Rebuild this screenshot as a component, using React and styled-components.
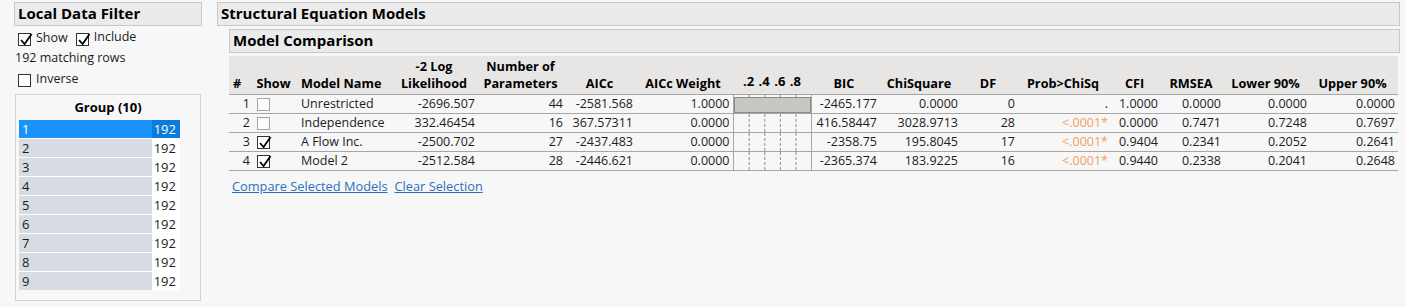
import React from 'react'
import styled, { createGlobalStyle } from 'styled-components'

const GlobalStyle = createGlobalStyle`
  body {
    margin: 0;
    background: #f7f7f7;
    font-family: "Open Sans", "Noto Sans", sans-serif;
    color: #1c1c1c;
  }
`

const Page = styled.div`
  display: flex;
  align-items: flex-start;
  gap: 15px;
  padding: 2px 6px 0 14px;
  height: 307px;
  box-sizing: border-box;
`

const FilterPane = styled.div`
  width: 188px;
  flex: none;
  display: flex;
  flex-direction: column;
`

const ReportPane = styled.div`
  flex: 1;
  display: flex;
  flex-direction: column;
`

const OutlineHeader = styled.div`
  height: 24px;
  box-sizing: border-box;
  margin-left: ${p => p.$indent || 0}px;
  margin-top: ${p => p.$top || 0}px;
  border: 1px solid #c8c8c8;
  background: #ebebeb;
  padding-left: 3px;
  font-size: 15px;
  font-weight: 700;
  line-height: 21px;
  color: #000;
  white-space: nowrap;
`

const OptionRow = styled.div`
  display: flex;
  align-items: center;
  gap: 5px;
  margin: ${p => p.$margin || '0'};
  padding-left: 4px;
  font-size: 12.5px;
  line-height: 14px;
`

const OptionLabel = styled.span`
  margin-right: 3px;
  position: relative;
  top: ${p => p.$lift ? -2 : -1}px;
`

const CountLine = styled.div`
  margin-top: 5px;
  padding-left: 1px;
  font-size: 12.5px;
  line-height: 14px;
`

const Box = styled.span`
  display: inline-block;
  flex: none;
  width: 13px;
  height: 13px;
  box-sizing: border-box;
  border: 1px solid ${p => (p.$dim ? '#a4a4a4' : '#333')};
  background: ${p => (p.$dim ? '#fbfbfb' : '#fff')};
  position: relative;
  vertical-align: middle;

  svg {
    position: absolute;
    left: -1px;
    top: -2px;
    overflow: visible;
  }
`

const Check = ({ checked, dim }) => (
  <Box $dim={dim && !checked}>
    {checked && (
      <svg width="15" height="15" viewBox="0 0 15 15">
        <path d="M3 8 L6.6 12 L13.6 2" fill="none" stroke="#000" strokeWidth="1.8" />
      </svg>
    )}
  </Box>
)

const GroupBox = styled.div`
  margin: 7px 0 0 1px;
  width: 186px;
  height: 207px;
  box-sizing: border-box;
  border: 1px solid #d2d2d2;
  padding: 3px 0 0 3px;
`

const GroupTitle = styled.div`
  text-align: center;
  font-size: 13px;
  font-weight: 700;
  line-height: 19px;
  margin-bottom: 3px;
  padding-right: 3px;
  color: #000;
`

const LevelList = styled.div`
  width: 161px;
  background: #fff;
  display: flex;
  flex-direction: column;
  gap: 1px;
`

const LevelRow = styled.div`
  display: flex;
  height: 18px;
  font-size: 13px;
  line-height: 18px;
  color: ${p => (p.$selected ? '#fff' : '#1c1c1c')};
`

const LevelName = styled.div`
  width: 133px;
  padding-left: 3px;
  box-sizing: border-box;
  background: ${p => (p.$selected ? '#1a91fb' : '#d6dce1')};
`

const LevelCount = styled.div`
  flex: 1;
  text-align: right;
  padding-right: 4px;
  background: ${p => (p.$selected ? '#0c7cdc' : '#fff')};
`

const Table = styled.table`
  margin: 3px 0 0 12px;
  width: 1169px;
  table-layout: fixed;
  border-collapse: collapse;
  font-size: 12.5px;
`

const Th = styled.th`
  height: 34px;
  padding: 0 3px 2px 0;
  vertical-align: bottom;
  text-align: ${p => p.$align || 'center'};
  padding-left: ${p => (p.$align === 'left' ? 4 : 0)}px;
  background: #e8e6e4;
  border-bottom: 1px solid #a6a6a6;
  font-size: 12.7px;
  font-weight: 700;
  line-height: 17px;
  color: #000;
  white-space: nowrap;
`

const Td = styled.td`
  height: 18px;
  padding: 0 3px 0 ${p => (p.$align === 'left' ? 4 : 0)}px;
  text-align: ${p => p.$align || 'right'};
  border-bottom: 1px solid #a6a6a6;
  line-height: 18px;
  white-space: nowrap;
  color: ${p => (p.$flag ? '#f0a060' : 'inherit')};
`

const ChartTh = styled(Th)`
  padding: 0 0 4px;
  font-size: 13px;
`

const ChartTd = styled.td`
  height: 18px;
  padding: 0;
  border: 1px solid #a6a6a6;
  border-top: none;
  line-height: 0;
`

const TickRow = styled.div`
  display: flex;
  padding: 0 7.8px;
`

const Tick = styled.span`
  width: 15.6px;
  text-align: center;
`

const Links = styled.div`
  display: flex;
  gap: 7px;
  margin: 7px 0 0 15px;
  font-size: 12.8px;
  line-height: 16px;
`

const Link = styled.a`
  color: #2c6fbf;
  text-decoration: underline;
  cursor: pointer;
`

const WeightBar = ({ value }) => (
  <svg width="77" height="18" viewBox="0 0 77 18">
    {[15.2, 30.8, 46.4, 62].map(x => (
      <line key={x} x1={x} x2={x} y1="0" y2="18" stroke="#8e8e8e" strokeDasharray="3 2" />
    ))}
    {value > 0 && (
      <rect x="0.5" y="2.5" width={76 * value} height="15" fill="#c7c6c1" stroke="#8a8a86" />
    )}
  </svg>
)

const columns = [
  { key: 'n', width: 24 },
  { key: 'show', width: 44 },
  { key: 'name', width: 96 },
  { key: 'll', width: 85 },
  { key: 'np', width: 88 },
  { key: 'aicc', width: 70 },
  { key: 'w', width: 97 },
  { key: 'bar', width: 78 },
  { key: 'bic', width: 69 },
  { key: 'chi', width: 81 },
  { key: 'df', width: 57 },
  { key: 'p', width: 93 },
  { key: 'cfi', width: 50 },
  { key: 'rmsea', width: 63 },
  { key: 'lo', width: 86 },
  { key: 'hi', width: 88 },
]

const models = [
  ['Unrestricted', false, '-2696.507', '44', '-2581.568', '1.0000', 1, '-2465.177', '0.0000', '0', '.', '1.0000', '0.0000', '0.0000', '0.0000'],
  ['Independence', false, '332.46454', '16', '367.57311', '0.0000', 0, '416.58447', '3028.9713', '28', '<.0001*', '0.0000', '0.7471', '0.7248', '0.7697'],
  ['A Flow Inc.', true, '-2500.702', '27', '-2437.483', '0.0000', 0, '-2358.75', '195.8045', '17', '<.0001*', '0.9404', '0.2341', '0.2052', '0.2641'],
  ['Model 2', true, '-2512.584', '28', '-2446.621', '0.0000', 0, '-2365.374', '183.9225', '16', '<.0001*', '0.9440', '0.2338', '0.2041', '0.2648'],
]

const levels = ['1', '2', '3', '4', '5', '6', '7', '8', '9']

const App = () => (
  <>
    <GlobalStyle />
    <Page>
      <FilterPane>
        <OutlineHeader>Local Data Filter</OutlineHeader>
        <OptionRow $margin="6px 0 0">
          <Check checked />
          <OptionLabel>Show</OptionLabel>
          <Check checked />
          <OptionLabel $lift>Include</OptionLabel>
        </OptionRow>
        <CountLine>192 matching rows</CountLine>
        <OptionRow $margin="8px 0 0">
          <Check />
          <OptionLabel>Inverse</OptionLabel>
        </OptionRow>
        <GroupBox>
          <GroupTitle>Group (10)</GroupTitle>
          <LevelList>
            {levels.map((l, i) => (
              <LevelRow key={l} $selected={i === 0}>
                <LevelName $selected={i === 0}>{l}</LevelName>
                <LevelCount $selected={i === 0}>192</LevelCount>
              </LevelRow>
            ))}
          </LevelList>
        </GroupBox>
      </FilterPane>

      <ReportPane>
        <OutlineHeader>Structural Equation Models</OutlineHeader>
        <OutlineHeader $indent={12} $top={3}>Model Comparison</OutlineHeader>
        <Table>
          <colgroup>
            {columns.map(c => (
              <col key={c.key} style={{ width: c.width }} />
            ))}
          </colgroup>
          <thead>
            <tr>
              <Th $align="left">#</Th>
              <Th>Show</Th>
              <Th $align="left">Model Name</Th>
              <Th>-2 Log<br />Likelihood</Th>
              <Th>Number of<br />Parameters</Th>
              <Th>AICc</Th>
              <Th>AICc Weight</Th>
              <ChartTh>
                <TickRow>
                  <Tick>.2</Tick>
                  <Tick>.4</Tick>
                  <Tick>.6</Tick>
                  <Tick>.8</Tick>
                </TickRow>
              </ChartTh>
              <Th>BIC</Th>
              <Th>ChiSquare</Th>
              <Th>DF</Th>
              <Th>Prob&gt;ChiSq</Th>
              <Th>CFI</Th>
              <Th>RMSEA</Th>
              <Th>Lower 90%</Th>
              <Th>Upper 90%</Th>
            </tr>
          </thead>
          <tbody>
            {models.map((m, i) => (
              <tr key={m[0]}>
                <Td>{i + 1}</Td>
                <Td $align="left">
                  <Check checked={m[1]} dim />
                </Td>
                <Td $align="left">{m[0]}</Td>
                <Td>{m[2]}</Td>
                <Td>{m[3]}</Td>
                <Td>{m[4]}</Td>
                <Td>{m[5]}</Td>
                <ChartTd>
                  <WeightBar value={m[6]} />
                </ChartTd>
                <Td>{m[7]}</Td>
                <Td>{m[8]}</Td>
                <Td>{m[9]}</Td>
                <Td $flag={m[10] !== '.'}>{m[10]}</Td>
                <Td>{m[11]}</Td>
                <Td>{m[12]}</Td>
                <Td>{m[13]}</Td>
                <Td>{m[14]}</Td>
              </tr>
            ))}
          </tbody>
        </Table>
        <Links>
          <Link>Compare Selected Models</Link>
          <Link>Clear Selection</Link>
        </Links>
      </ReportPane>
    </Page>
  </>
)

export default App
